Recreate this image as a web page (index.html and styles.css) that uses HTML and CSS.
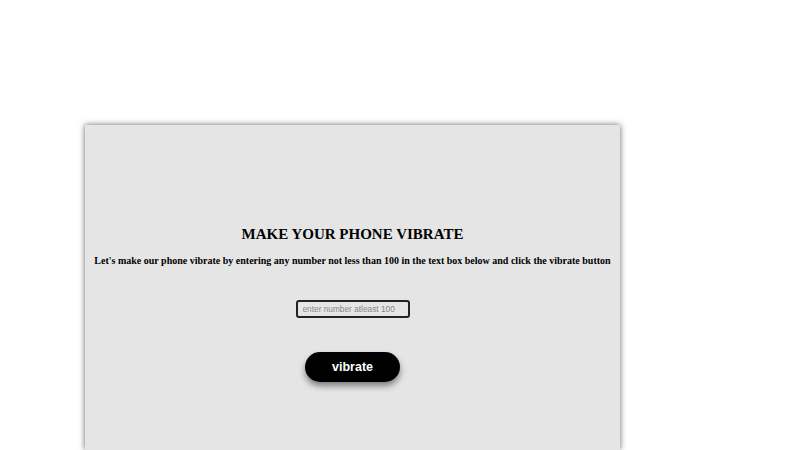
FILE: index.html
```html
<html>
    <head>
        <meta charset="utf-8">
        <link rel="stylesheet" href="styles.css">
        <title>Vibrate</title>
    </head>
    <body>
        <div class="card">
            <h2 class="title">MAKE YOUR PHONE VIBRATE</h2>
            <p class="intro">Let's make our phone vibrate by entering any number not less than 100 in the text box below and click the vibrate button</p>
            <input type="text" class="num" placeholder="enter number atleast 100">
            <button class="vibrate-btn">vibrate</button>
        </div>
    </body>
</html>
```

FILE: styles.css
```css
body {
    margin: 0;
    background: #fff;
    font-family: "Liberation Serif", serif;
}
.card {
    margin: 125px 0 0 85px;
    width: 535px;
    height: 325px;
    background: #e5e5e5;
    box-shadow: 0 0 6px rgba(0, 0, 0, 0.6);
    display: flex;
    flex-direction: column;
    align-items: center;
    padding-top: 101px;
    box-sizing: border-box;
}
.title {
    margin: 0;
    font-size: 15px;
    line-height: 17px;
    font-weight: bold;
    color: #000;
}
.intro {
    margin: 12px 0 0;
    font-size: 10px;
    line-height: 12px;
    font-weight: bold;
    color: #000;
    white-space: nowrap;
}
/* input keeps the card grey, only the dark rounded border shows */
.num {
    margin-top: 33px;
    width: 114px;
    height: 18px;
    box-sizing: border-box;
    border: 2px solid #222;
    border-radius: 3px;
    background: #e5e5e5;
    padding: 0 5px;
    font-family: "Liberation Sans", sans-serif;
    font-size: 8.3px;
    outline: none;
}
.num::placeholder {
    color: #888;
}
.vibrate-btn {
    margin-top: 34px;
    width: 95px;
    height: 30px;
    border: none;
    border-radius: 15px;
    background: #000;
    color: #fff;
    font-family: "Liberation Sans", sans-serif;
    font-weight: bold;
    font-size: 12.5px;
    box-shadow: 0 4px 6px rgba(0, 0, 0, 0.45);
}
```
